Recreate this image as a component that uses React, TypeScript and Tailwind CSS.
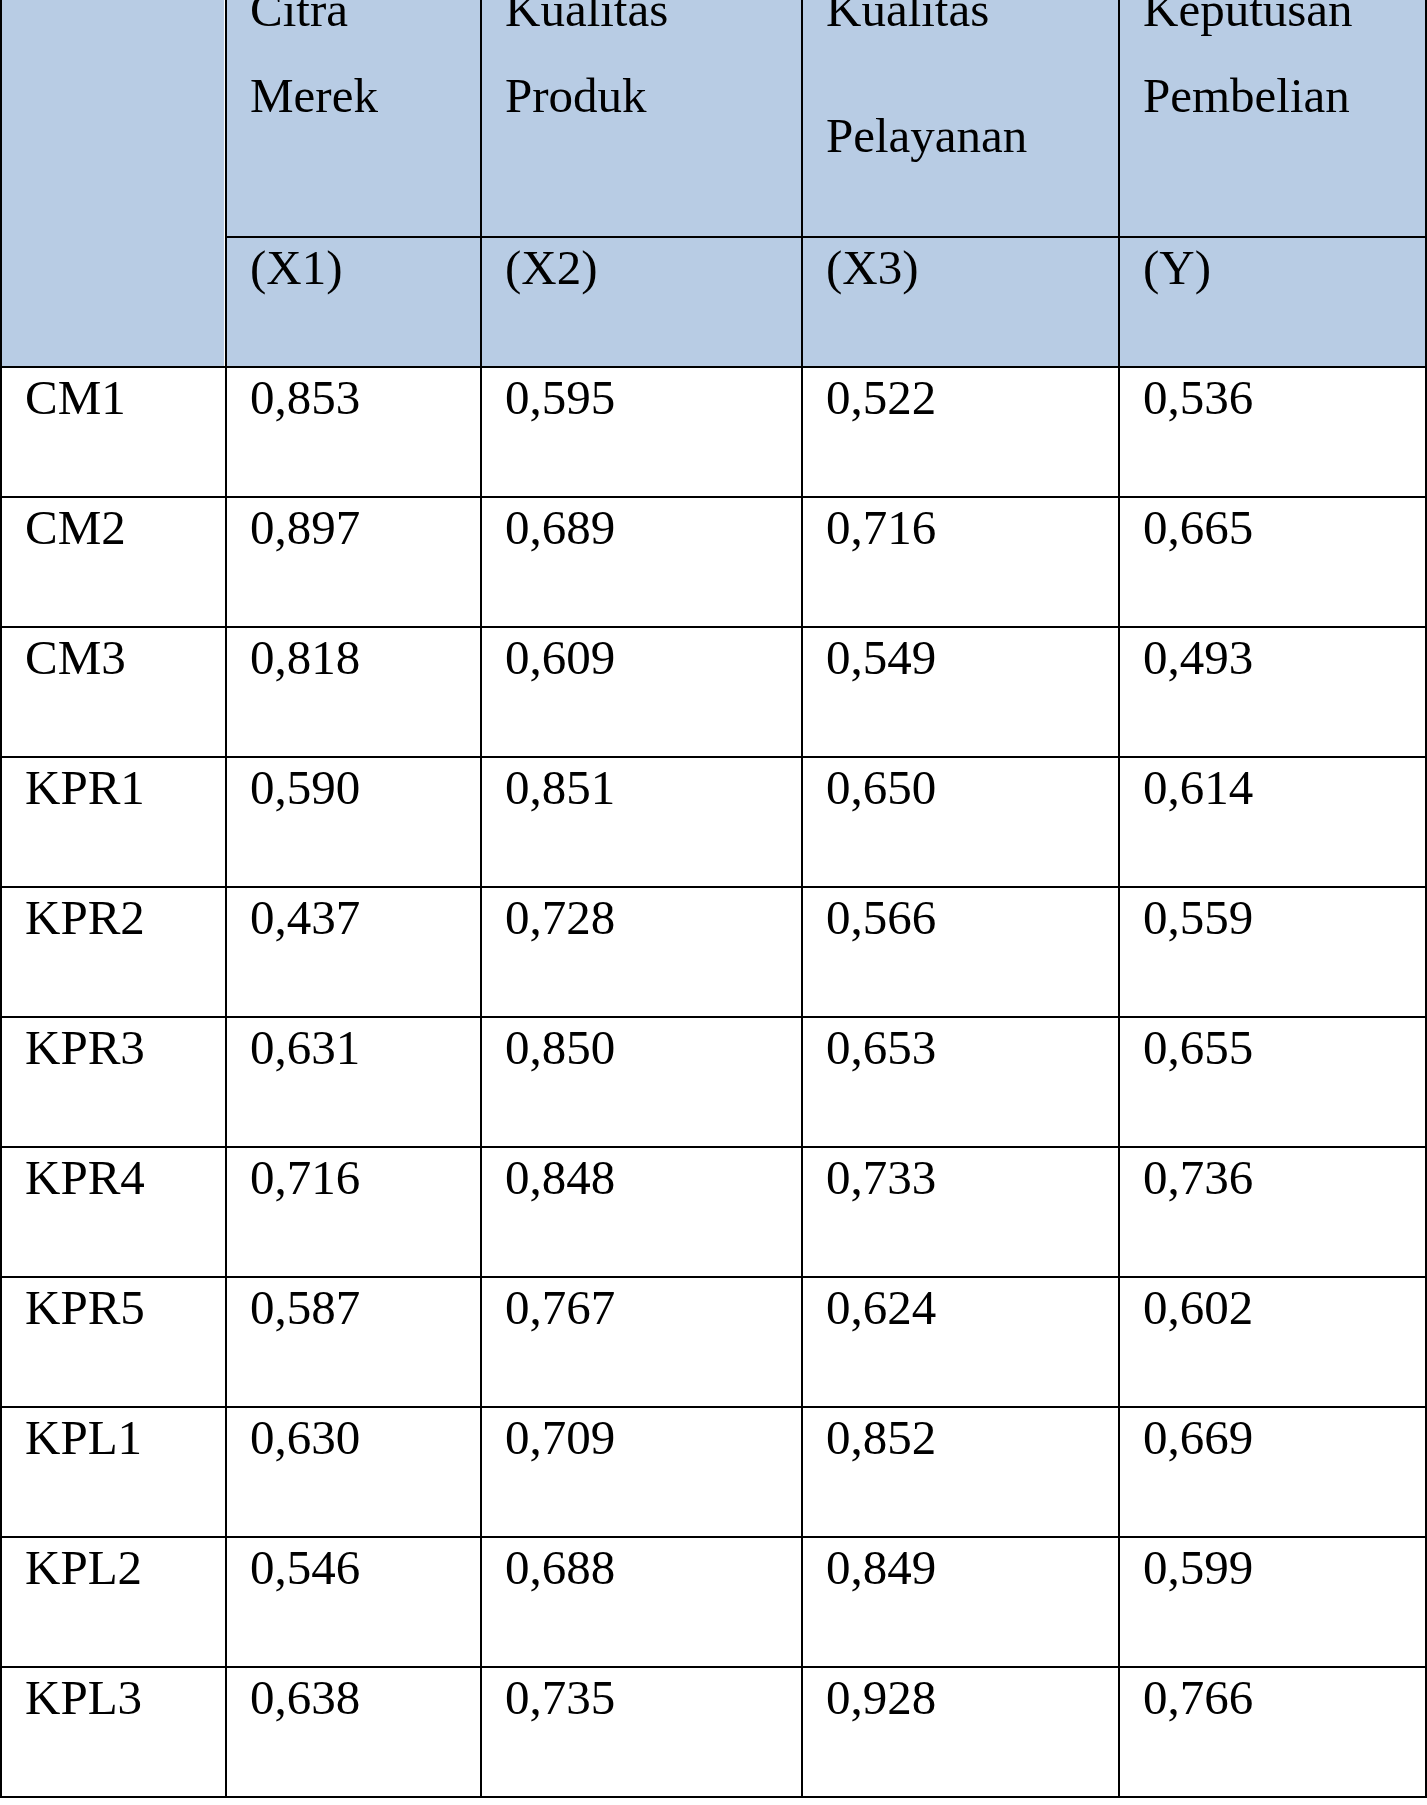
const rows: [string, string, string, string, string][] = [
  ['CM1', '0,853', '0,595', '0,522', '0,536'],
  ['CM2', '0,897', '0,689', '0,716', '0,665'],
  ['CM3', '0,818', '0,609', '0,549', '0,493'],
  ['KPR1', '0,590', '0,851', '0,650', '0,614'],
  ['KPR2', '0,437', '0,728', '0,566', '0,559'],
  ['KPR3', '0,631', '0,850', '0,653', '0,655'],
  ['KPR4', '0,716', '0,848', '0,733', '0,736'],
  ['KPR5', '0,587', '0,767', '0,624', '0,602'],
  ['KPL1', '0,630', '0,709', '0,852', '0,669'],
  ['KPL2', '0,546', '0,688', '0,849', '0,599'],
  ['KPL3', '0,638', '0,735', '0,928', '0,766'],
];

const head = 'bg-[#b8cce4] border-r-2 border-b-2 border-black pl-[23px]';
const cell = 'h-[130px] border-r-2 border-b-2 border-black pl-[23px] pt-[2px] leading-[56px]';

export default function App() {
  return (
    <div className="w-[1427px] h-[1805px] overflow-hidden bg-white text-black font-['Liberation_Serif',serif] text-[49px]">
      <div className="-mt-[33px] border-l-2 border-black grid grid-cols-[225px_255px_321px_317px_307px]">
        <div className="row-span-2 bg-[#b8cce4] border-r-2 border-b-2 border-black shadow-[inset_-1px_0_0_#ffffff]" />
        <div className={`${head} h-[271px] leading-[86px]`}>
          <div>Citra</div>
          <div>Merek</div>
        </div>
        <div className={`${head} h-[271px] leading-[86px]`}>
          <div>Kualitas</div>
          <div>Produk</div>
        </div>
        <div className={`${head} h-[271px] leading-[86px]`}>
          <div>Kualitas</div>
          <div className="mt-[40px]">Pelayanan</div>
        </div>
        <div className={`${head} h-[271px] leading-[86px]`}>
          <div>Keputusan</div>
          <div>Pembelian</div>
        </div>
        {['(X1)', '(X2)', '(X3)', '(Y)'].map((t) => (
          <div key={t} className={`${head} h-[130px] pt-[2px] leading-[56px]`}>
            {t}
          </div>
        ))}
        {rows.map((r) =>
          r.map((v, i) => (
            <div key={r[0] + i} className={cell}>
              {v}
            </div>
          ))
        )}
      </div>
    </div>
  );
}
